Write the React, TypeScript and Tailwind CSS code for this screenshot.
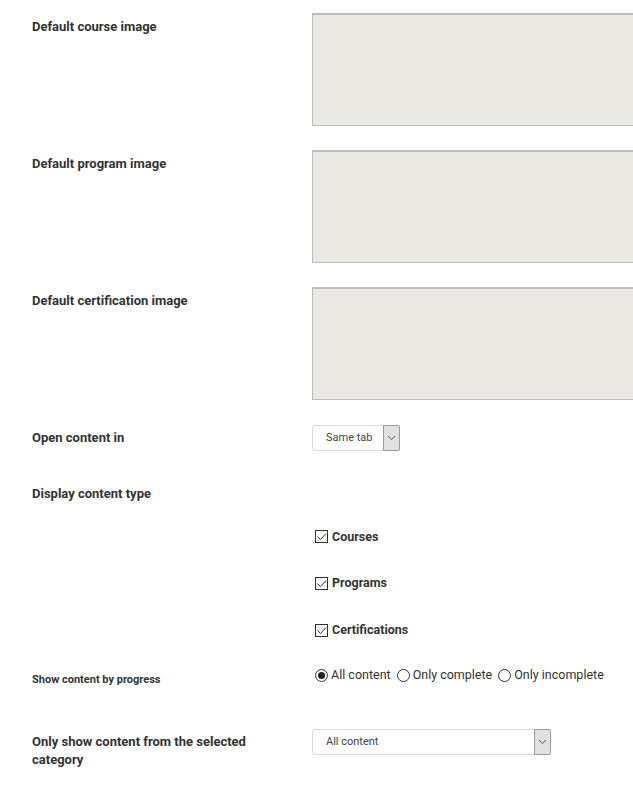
import React, { useState } from "react";

const font = { fontFamily: "Roboto, 'Open Sans', sans-serif" };

const Chevron: React.FC = () => (
  <svg width="9" height="6" viewBox="0 0 9 6" fill="none">
    <path d="M1 1l3.5 3.5L8 1" stroke="#555" strokeWidth="1" />
  </svg>
);

const ImageBox: React.FC<{ label: string }> = ({ label }) => (
  <div className="flex">
    <div className="w-[280px] shrink-0 pt-[4px] text-[13px] font-bold text-[#333]">{label}</div>
    <div className="h-[113px] w-[340px] shrink-0 border border-[#bdbdbd] border-t-2 bg-[#eae9e3]" />
  </div>
);

const Select: React.FC<{ value: string; width: string }> = ({ value, width }) => (
  <div
    className={`flex h-[26px] items-stretch rounded-[3px] border border-[#dcdcdc] bg-white ${width}`}
  >
    <div className="flex flex-1 items-center pl-[13px] text-[11px] text-[#444]">{value}</div>
    <div className="flex w-[17px] items-center justify-center rounded-r-[2px] border border-[#9a9a9a] bg-[#e1e1e1] -my-px -mr-px">
      <Chevron />
    </div>
  </div>
);

const Check: React.FC<{ label: string }> = ({ label }) => (
  <label className="flex items-center gap-[4px] text-[12.5px] font-bold text-[#333]">
    <span className="flex h-[13px] w-[13px] items-center justify-center border border-[#333] bg-white">
      <svg width="11" height="9" viewBox="0 0 11 9" fill="none">
        <path d="M1.5 4.5l3 3L10 1.5" stroke="#333" strokeWidth="1" />
      </svg>
    </span>
    {label}
  </label>
);

const Radio: React.FC<{ label: string; checked?: boolean }> = ({ label, checked }) => (
  <label className="flex items-center gap-[3px] text-[12.5px] text-[#333]">
    <span className="flex h-[13px] w-[13px] items-center justify-center rounded-full border border-[#333] bg-white">
      {checked && <span className="h-[7px] w-[7px] rounded-full bg-[#222]" />}
    </span>
    {label}
  </label>
);

export default function App() {
  const [progress] = useState("all");

  return (
    <div className="min-h-[785px] w-[633px] overflow-hidden bg-white" style={font}>
      <div className="flex flex-col gap-[24px] pl-[32px] pt-[13px]">
        <ImageBox label="Default course image" />
        <ImageBox label="Default program image" />
        <ImageBox label="Default certification image" />
      </div>

      <div className="mt-[25px] flex items-center pl-[32px]">
        <div className="w-[280px] text-[13px] font-bold text-[#333]">Open content in</div>
        <Select value="Same tab" width="w-[88px]" />
      </div>

      <div className="mt-[33px] pl-[32px] text-[13px] font-bold text-[#333]">Display content type</div>

      <div className="ml-[315px] mt-[24px] flex flex-col gap-[28px]">
        <Check label="Courses" />
        <Check label="Programs" />
        <Check label="Certifications" />
      </div>

      <div className="mt-[26px] flex items-start pl-[32px]">
        <div className="w-[283px] pt-[6px] text-[11px] font-bold text-[#333]">Show content by progress</div>
        <div className="flex gap-[6px]">
          <Radio label="All content" checked={progress === "all"} />
          <Radio label="Only complete" checked={progress === "complete"} />
          <Radio label="Only incomplete" checked={progress === "incomplete"} />
        </div>
      </div>

      <div className="mt-[41px] flex items-start pl-[32px]">
        <div className="w-[280px] pt-[4px] text-[13px] font-bold leading-[18px] text-[#333]">
          Only show content from the selected
          <br />
          category
        </div>
        <Select value="All content" width="w-[239px]" />
      </div>
    </div>
  );
}
